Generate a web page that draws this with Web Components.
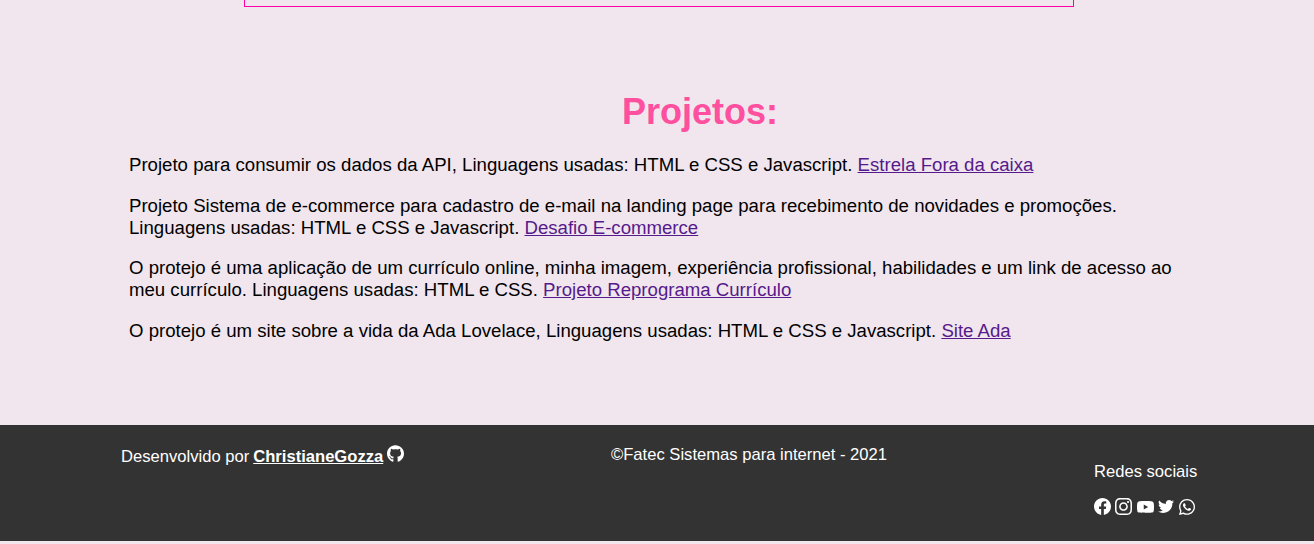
<!DOCTYPE html>
<html lang="pt-BR">
<head>
<meta charset="utf-8">
<title>Projetos</title>
<style>
  html, body { margin: 0; padding: 0; }
  body {
    background: #f1e6ee;
    font-family: "Liberation Sans", Arial, sans-serif;
    color: #000;
    height: 544px;
    overflow: hidden;
  }
</style>
</head>
<body>
<top-frame></top-frame>

<projects-section heading="Projetos:">
  <project-item href="#">Projeto para consumir os dados da API, Linguagens usadas: HTML e CSS e Javascript. <span slot="link">Estrela Fora da caixa</span></project-item>
  <project-item href="#">Projeto Sistema de e-commerce para cadastro de e-mail na landing page para recebimento de novidades e promoções. Linguagens usadas: HTML e CSS e Javascript. <span slot="link">Desafio E-commerce</span></project-item>
  <project-item href="#">O protejo é uma aplicação de um currículo online, minha imagem, experiência profissional, habilidades e um link de acesso ao meu currículo. Linguagens usadas: HTML e CSS. <span slot="link">Projeto Reprograma Currículo</span></project-item>
  <project-item href="#">O protejo é um site sobre a vida da Ada Lovelace, Linguagens usadas: HTML e CSS e Javascript. <span slot="link">Site Ada</span></project-item>
</projects-section>

<site-footer>
  <social-icon name="facebook"></social-icon>
  <social-icon name="instagram"></social-icon>
  <social-icon name="youtube"></social-icon>
  <social-icon name="twitter"></social-icon>
  <social-icon name="whatsapp"></social-icon>
</site-footer>

<script>
// viewBoxes are cropped to the glyph so each icon can be sized by what it draws
const ICONS = {
  facebook: ["8 8 496 496", 17, 17, "M504 256C504 119 393 8 256 8S8 119 8 256c0 123.78 90.69 226.38 209.25 245V327.69h-63V256h63v-54.64c0-62.15 37-96.48 93.67-96.48 27.14 0 55.52 4.84 55.52 4.84v61h-31.28c-30.8 0-40.41 19.12-40.41 38.73V256h68.78l-11 71.69h-57.78V501C413.31 482.38 504 379.78 504 256z"],
  instagram: ["0 32 448 448", 17, 17, "M224.1 141c-63.6 0-114.9 51.3-114.9 114.9s51.3 114.9 114.9 114.9S339 319.5 339 255.9 287.7 141 224.1 141zm0 189.6c-41.1 0-74.7-33.5-74.7-74.7s33.5-74.7 74.7-74.7 74.7 33.5 74.7 74.7-33.6 74.7-74.7 74.7zm146.4-194.3c0 14.9-12 26.8-26.8 26.8-14.9 0-26.8-12-26.8-26.8s12-26.8 26.8-26.8 26.8 12 26.8 26.8zm76.1 27.2c-1.7-35.9-9.9-67.7-36.2-93.9-26.2-26.2-58-34.4-93.9-36.2-37-2.1-147.9-2.1-184.9 0-35.8 1.7-67.6 9.9-93.9 36.1s-34.4 58-36.2 93.9c-2.1 37-2.1 147.9 0 184.9 1.7 35.9 9.9 67.7 36.2 93.9s58 34.4 93.9 36.2c37 2.1 147.9 2.1 184.9 0 35.9-1.7 67.7-9.9 93.9-36.2 26.2-26.2 34.4-58 36.2-93.9 2.1-37 2.1-147.8 0-184.8zM398.8 388c-7.8 19.6-22.9 34.7-42.6 42.6-29.5 11.7-99.5 9-132.1 9s-102.7 2.6-132.1-9c-19.6-7.8-34.7-22.9-42.6-42.6-11.7-29.5-9-99.5-9-132.1s-2.6-102.7 9-132.1c7.8-19.6 22.9-34.7 42.6-42.6 29.5-11.7 99.5-9 132.1-9s102.7-2.6 132.1 9c19.6 7.8 34.7 22.9 42.6 42.6 11.7 29.5 9 99.5 9 132.1s2.7 102.7-9 132.1z"],
  youtube: ["15 64 546 384", 17, 12, "M549.655 124.083c-6.281-23.65-24.787-42.276-48.284-48.597C458.781 64 288 64 288 64S117.22 64 74.629 75.486c-23.497 6.322-42.003 24.947-48.284 48.597-11.412 42.867-11.412 132.305-11.412 132.305s0 89.438 11.412 132.305c6.281 23.65 24.787 41.5 48.284 47.821C117.22 448 288 448 288 448s170.78 0 213.371-11.486c23.497-6.321 42.003-24.171 48.284-47.821 11.412-42.867 11.412-132.305 11.412-132.305s0-89.438-11.412-132.305zm-317.51 213.508V175.185l142.739 81.205-142.739 81.201z"],
  twitter: ["0 48 512 416", 16, 13, "M459.37 151.716c.325 4.548.325 9.097.325 13.645 0 138.72-105.583 298.558-298.558 298.558-59.452 0-114.68-17.219-161.137-47.106 8.447.974 16.568 1.299 25.34 1.299 49.055 0 94.213-16.568 130.274-44.832-46.132-.975-84.792-31.188-98.112-72.772 6.498.974 12.995 1.624 19.818 1.624 9.421 0 18.843-1.3 27.614-3.573-48.081-9.747-84.143-51.98-84.143-102.985v-1.299c13.969 7.797 30.214 12.67 47.431 13.319-28.264-18.843-46.781-51.005-46.781-87.391 0-19.492 5.197-37.36 14.294-52.954 51.655 63.675 129.3 105.258 216.365 109.807-1.624-7.797-2.599-15.918-2.599-24.04 0-57.828 46.782-104.934 104.934-104.934 30.213 0 57.502 12.67 76.67 33.137 23.715-4.548 46.456-13.32 66.599-25.34-7.798 24.366-24.366 44.833-46.132 57.827 21.117-2.273 41.584-8.122 60.426-16.243-14.292 20.791-32.161 39.308-52.628 54.253z"],
  whatsapp: ["0 32 448 448", 16, 16, "M380.9 97.1C339 55.1 283.2 32 223.9 32c-122.4 0-222 99.6-222 222 0 39.1 10.2 77.3 29.6 111L0 480l117.7-30.9c32.4 17.7 68.9 27 106.1 27h.1c122.3 0 224.1-99.6 224.1-222 0-59.3-25.2-115-67.1-157zm-157 341.6c-33.2 0-65.7-8.9-94-25.7l-6.7-4-69.8 18.3L72 359.2l-4.4-7c-18.5-29.4-28.2-63.3-28.2-98.2 0-101.7 82.8-184.5 184.6-184.5 49.3 0 95.6 19.2 130.4 54.1 34.8 34.9 56.2 81.2 56.1 130.5 0 101.8-84.9 184.6-186.6 184.6zm101.2-138.2c-5.5-2.8-32.8-16.2-37.9-18-5.1-1.9-8.8-2.8-12.5 2.8-3.7 5.6-14.3 18-17.6 21.8-3.2 3.7-6.5 4.2-12 1.4-32.6-16.3-54-29.1-75.5-66-5.7-9.8 5.7-9.1 16.3-30.3 1.8-3.7.9-6.9-.5-9.7-1.4-2.8-12.5-30.1-17.1-41.2-4.5-10.8-9.1-9.3-12.5-9.5-3.2-.2-6.9-.2-10.6-.2-3.7 0-9.7 1.4-14.8 6.9-5.1 5.6-19.4 19-19.4 46.3 0 27.3 19.9 53.7 22.6 57.4 2.8 3.7 39.1 59.7 94.8 83.8 35.2 15.2 49 16.5 66.6 13.9 10.7-1.6 32.8-13.4 37.4-26.4 4.6-13 4.6-24.1 3.2-26.4-1.3-2.5-5-3.9-10.5-6.6z"],
  github: ["0 8 496 488", 17, 17, "M165.9 397.4c0 2-2.3 3.6-5.2 3.6-3.3 0-5.6-1.6-5.6-3.6 0-2 2.3-3.6 5.2-3.6 3-.3 5.6 1.3 5.6 3.6zm-31.1-4.5c-.7 2 1.3 4.3 4.3 4.9 2.6 1 5.6 0 6.2-2s-1.3-4.3-4.3-5.2c-2.6-.7-5.5.3-6.2 2.3zm44.2-1.7c-2.9.7-4.9 2.6-4.6 4.9.3 2 2.9 3.3 5.9 2.6 2.9-.7 4.9-2.6 4.6-4.6-.3-1.9-3-3.2-5.9-2.9zM244.8 8C106.1 8 0 113.3 0 252c0 110.9 69.8 205.8 169.5 239.2 12.8 2.3 17.3-5.6 17.3-12.1 0-6.2-.3-40.4-.3-61.4 0 0-70 15-84.7-29.8 0 0-11.4-29.1-27.8-36.6 0 0-22.9-15.7 1.6-16 0 0 24.9 2 38.6 25.8 21.9 38.6 58.6 27.5 72.9 20.9 2.3-16 8.8-27.1 16-33.7-55.9-6.2-112.3-14.3-112.3-110.5 0-27.5 7.6-41.3 23.6-58.9-2.6-6.5-11.1-33.3 2.6-67.9 20.9-6.5 69 27 69 27 20-5.6 41.5-8.5 62.8-8.5s42.8 2.9 62.8 8.5c0 0 48.1-33.6 69-27 13.7 34.7 5.2 61.4 2.6 67.9 16 17.7 25.8 31.5 25.8 58.9 0 96.5-58.9 104.2-114.8 110.5 9.2 7.9 17 22.9 17 46.4 0 33.7-.3 75.4-.3 83.6 0 6.5 4.6 14.4 17.3 12.1C428.2 457.8 496 362.9 496 252 496 113.3 383.5 8 244.8 8zM97.2 352.9c-1.3 1-1 3.3.7 5.2 1.6 1.6 3.9 2.3 5.2 1 1.3-1 1-3.3-.7-5.2-1.6-1.6-3.9-2.3-5.2-1zm-10.8-8.1c-.7 1.3.3 2.9 2.3 3.9 1.6 1 3.6.7 4.3-.7.7-1.3-.3-2.9-2.3-3.9-2-.6-3.6-.3-4.3.7zm32.4 35.6c-1.6 1.3-1 4.3 1.3 6.2 2.3 2.3 5.2 2.6 6.5 1 1.3-1.3.7-4.3-1.3-6.2-2.2-2.3-5.2-2.6-6.5-1zm-11.4-14.7c-1.6 1-1.6 3.6 0 5.9 1.6 2.3 4.3 3.3 5.6 2.3 1.6-1.3 1.6-3.9 0-6.2-1.4-2.3-4-3.3-5.6-2z"]
};

function iconSvg(name) {
  const [box, w, h, d] = ICONS[name];
  return `<svg viewBox="${box}" width="${w}" height="${h}" fill="currentColor" aria-hidden="true"><path d="${d}"></path></svg>`;
}

class TopFrame extends HTMLElement {
  constructor() {
    super();
    this.attachShadow({ mode: "open" });
    this.shadowRoot.innerHTML = `
      <style>
        :host {
          display: block;
          box-sizing: border-box;
          width: 830px;
          height: 7px;
          margin-left: 244px;
          border: 1px solid #f0a;
          border-top: none;
        }
      </style>
    `;
  }
}

class ProjectsSection extends HTMLElement {
  constructor() {
    super();
    this.attachShadow({ mode: "open" });
    this.shadowRoot.innerHTML = `
      <style>
        :host {
          display: block;
          box-sizing: border-box;
          width: 1142px;
          height: 418px;
          margin-left: 129px;
          padding-top: 84px;
        }
        h2 {
          margin: 0 0 22px;
          font-size: 36px;
          line-height: 41px;
          font-weight: bold;
          text-align: center;
          color: #ff4f9f;
        }
        .list {
          display: flex;
          flex-direction: column;
          gap: 18.5px;
          width: 1060px;
        }
      </style>
      <h2></h2>
      <div class="list"><slot></slot></div>
    `;
    this.shadowRoot.querySelector("h2").textContent = this.getAttribute("heading");
  }
}

class ProjectItem extends HTMLElement {
  constructor() {
    super();
    this.attachShadow({ mode: "open" });
    this.shadowRoot.innerHTML = `
      <style>
        :host {
          display: block;
          font-size: 18.62px;
          line-height: 22px;
        }
        a { color: #551a8b; }
      </style>
      <slot></slot><a><slot name="link"></slot></a>
    `;
    this.shadowRoot.querySelector("a").href = this.getAttribute("href");
  }
}

class SocialIcon extends HTMLElement {
  constructor() {
    super();
    this.attachShadow({ mode: "open" });
    this.shadowRoot.innerHTML = `
      <style>
        :host { display: block; color: #fff; }
        :host([name="youtube"]), :host([name="whatsapp"]) { margin-left: 1px; }
        svg { display: block; }
      </style>
      ${iconSvg(this.getAttribute("name"))}
    `;
  }
}

class SiteFooter extends HTMLElement {
  constructor() {
    super();
    this.attachShadow({ mode: "open" });
    this.shadowRoot.innerHTML = `
      <style>
        :host {
          display: grid;
          grid-template-columns: 490px 483px auto;
          box-sizing: border-box;
          height: 116px;
          padding-left: 121px;
          background: #333;
          color: #fff;
          font-size: 16.6px;
          line-height: 18px;
        }
        .dev { padding-top: 23px; display: flex; align-items: flex-start; }
        .dev a { color: #fff; font-weight: bold; margin: 0 4px 0 4px; }
        .dev svg { display: block; margin-top: -3px; }
        .copy { padding-top: 21px; }
        .social { padding-top: 38px; }
        .row { display: flex; align-items: center; gap: 4px; height: 17px; margin-top: 17px; }
      </style>
      <div class="dev">Desenvolvido por <a href="#">ChristianeGozza</a>${iconSvg("github")}</div>
      <div class="copy">©Fatec Sistemas para internet - 2021</div>
      <div class="social">
        <div>Redes sociais</div>
        <div class="row"><slot></slot></div>
      </div>
    `;
  }
}

customElements.define("top-frame", TopFrame);
customElements.define("projects-section", ProjectsSection);
customElements.define("project-item", ProjectItem);
customElements.define("social-icon", SocialIcon);
customElements.define("site-footer", SiteFooter);
</script>
</body>
</html>
